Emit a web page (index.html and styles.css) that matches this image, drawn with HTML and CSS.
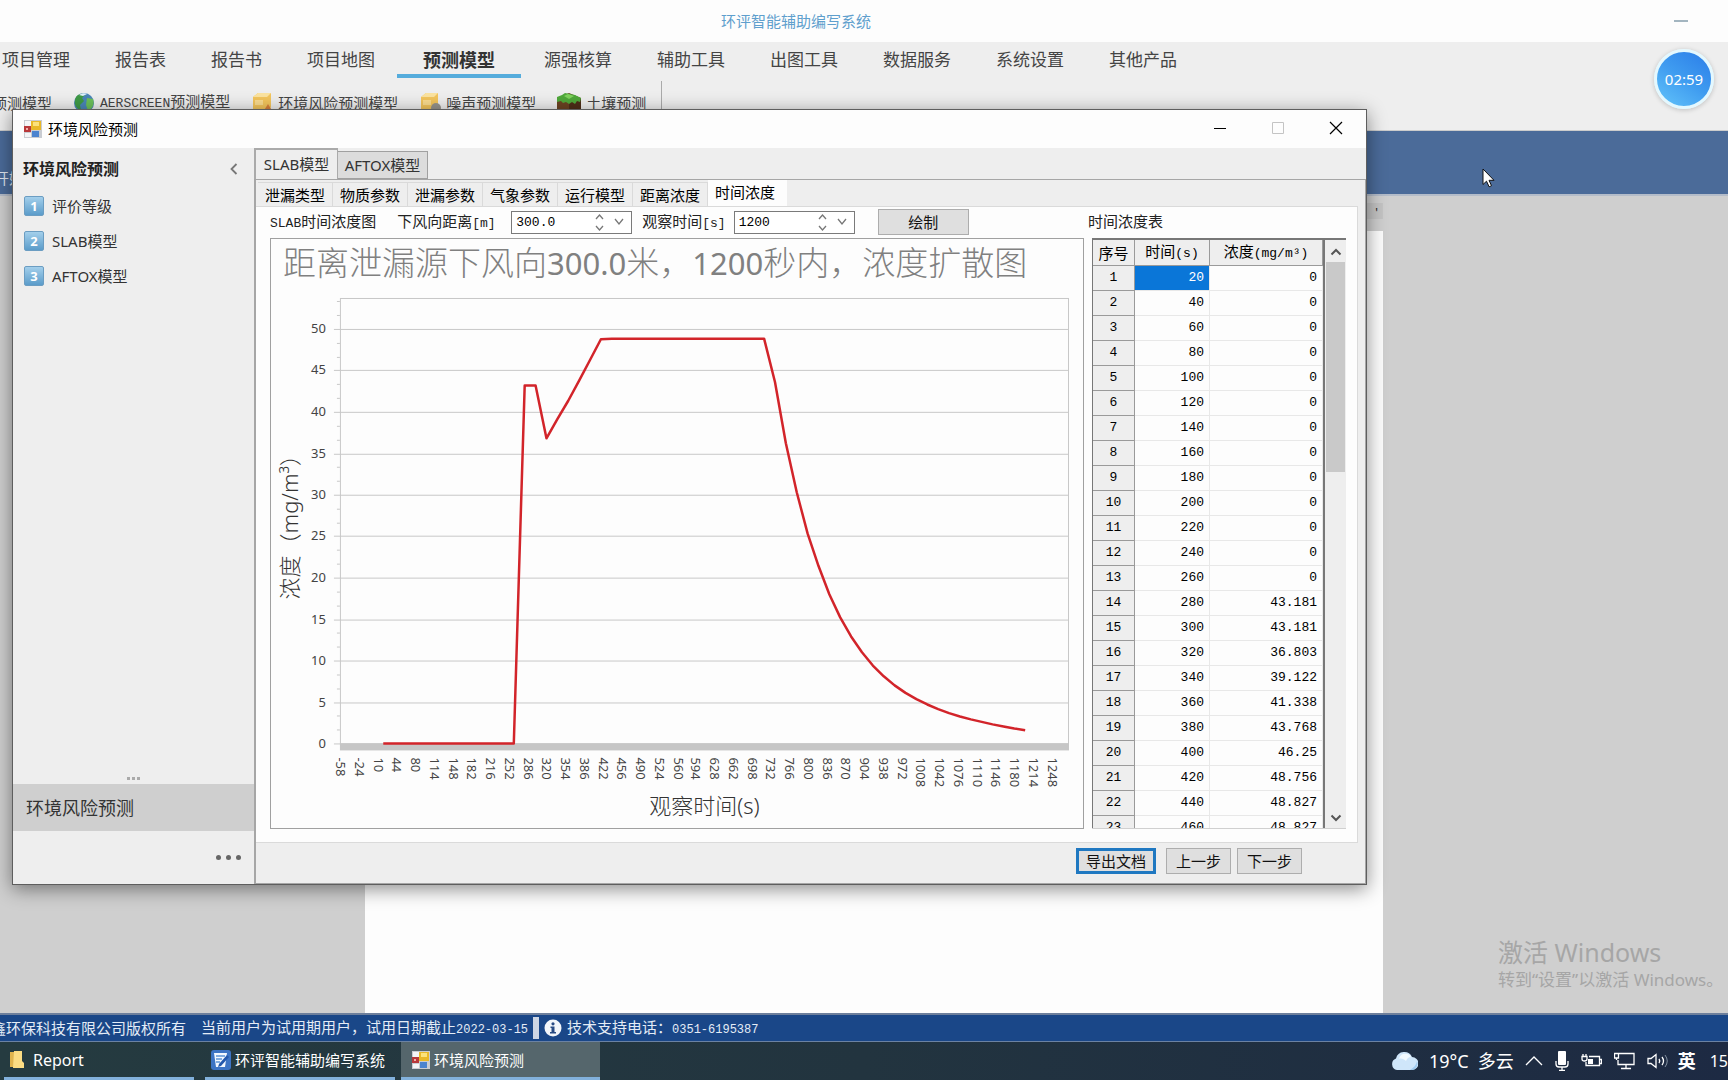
FILE: index.html
```html
<!DOCTYPE html>
<html lang="zh-CN">
<head>
    <meta charset="UTF-8">
    <meta name="viewport" content="width=device-width, initial-scale=1.0">
    <title>环评智能辅助编写系统</title>
    <link rel="stylesheet" href="styles.css">
</head>
<body>
    <div class="app">
        <header class="app-title">
            <h1>环评智能辅助编写系统</h1>
            <button class="app-min" aria-label="最小化"></button>
        </header>
        <nav class="menu">
            <button>项目管理</button>
            <button>报告表</button>
            <button>报告书</button>
            <button>项目地图</button>
            <button class="active">预测模型</button>
            <button>源强核算</button>
            <button>辅助工具</button>
            <button>出图工具</button>
            <button>数据服务</button>
            <button>系统设置</button>
            <button>其他产品</button>
        </nav>
        <div class="ribbon">
            <button class="cut">预测模型</button>
            <button>
                <svg width="22" height="22" viewBox="0 0 22 22"><circle cx="11" cy="11" r="10" fill="#4a86b8"/><path d="M3 5c3-4 8-4 9-2l-3 3 2 3-4 4 1 5C3 17 0 11 3 5z" fill="#3f9a45"/><path d="M14 6l6 1c2 5-1 10-5 12l-2-6z" fill="#6cc05a"/><path d="M6 3c3-2 6-2 8-1l-4 2z" fill="#dff0ff"/></svg>
                <span><span class="mono">AERSCREEN</span>预测模型</span>
            </button>
            <button>
                <svg width="22" height="22" viewBox="0 0 22 22"><path d="M2 5l5-4h13v14l-4 5H2z" fill="#f3c55c"/><path d="M2 5l5-4h13l-4 4z" fill="#fbe3a0"/><path d="M4 8h8v5H4z" fill="#fadb8e"/><path d="M17 12l5 8H12z" fill="#d9803a"/></svg>
                <span>环境风险预测模型</span>
            </button>
            <button>
                <svg width="22" height="22" viewBox="0 0 22 22"><path d="M2 5l5-4h12v14l-4 5H2z" fill="#f3c55c"/><path d="M2 5l5-4h12l-4 4z" fill="#fbe3a0"/><path d="M4 8h8v5H4z" fill="#fadb8e"/><circle cx="17" cy="16" r="5" fill="#97948c"/></svg>
                <span>噪声预测模型</span>
            </button>
            <button>
                <svg width="24" height="22" viewBox="0 0 24 22"><path d="M0 6l12-5 12 5v14H0z" fill="#6b4322"/><path d="M12 10v12l12-3V6z" fill="#4e2f18"/><path d="M0 5l5-2 3-2 5 1 5 1 6 3-1 4-3-1-2 3-3-2-3 2-3-2-3 1-2-2-4 1z" fill="#4fa83a"/><path d="M7 4l4-2 6 2-5 3z" fill="#7fd35c"/></svg>
                <span>土壤预测</span>
            </button>
            <span class="ribbon-line"></span>
        </div>
        <div class="doc-bar"><span>开始</span></div>
        <div class="workspace">
            <div class="ruler">'</div>
            <div class="sheet"></div>
        </div>
        <footer class="status">
            <span class="copyright">鑫环保科技有限公司版权所有</span>
            <span>当前用户为试用期用户，试用日期截止<span class="mono">2022-03-15</span></span>
            <i class="status-line"></i>
            <svg width="18" height="18" viewBox="0 0 18 18"><circle cx="9" cy="9" r="8.500" fill="#f2f6fa"/><circle cx="9" cy="4.800" r="1.600" fill="#274b83"/><path d="M6.500 7.500h4v5.500h1.500v1.500h-6V13h1.500V9H6.500z" fill="#274b83"/></svg>
            <span>技术支持电话：<span class="mono">0351-6195387</span></span>
        </footer>
        <div class="taskbar">
            <button class="task">
                <svg width="14" height="18" viewBox="0 0 14 18"><path d="M0 1h6v15H0z" fill="#e0b44e"/><path d="M4 0h8v10l2 2v5H3z" fill="#fbdc83"/></svg>
                <span class="report">Report</span>
            </button>
            <button class="task task-app">
                <svg width="20" height="20" viewBox="0 0 20 20"><rect width="20" height="20" rx="3" fill="#3d74c4"/><path d="M3 3h13l-2 14H5z" fill="#f3f8ff"/><path d="M5 6h9M5 9h6M5 12h4" stroke="#5d94d8" stroke-width="1.500"/><path d="M16 5l2 2-8 9-3 1 1-3z" fill="#2358ad"/></svg>
                <span>环评智能辅助编写系统</span>
            </button>
            <button class="task current">
                <svg width="18" height="18" viewBox="0 0 18 18"><use href="#form-icon"/></svg>
                <span>环境风险预测</span>
            </button>
            <div class="tray">
                <svg class="cloud" width="28" height="20" viewBox="0 0 28 20"><path d="M7 19a6 6 0 0 1-1-11.500A8.500 8.500 0 0 1 22 6a6.500 6.500 0 0 1 0 13z" fill="#cfe6fa"/><path d="M9 8a6.500 6.500 0 0 1 12-2c-3 0-4 2-5 4-2-2-5-3-7-2z" fill="#f2faff"/><path d="M20 19h2a6.500 6.500 0 0 0 5-9c-1 5-4 7-7 9z" fill="#9fcbf0"/></svg>
                <span class="weather">19°C&ensp;多云</span>
                <svg width="18" height="18" viewBox="0 0 18 18"><path d="M1 13l8-8 8 8" class="line"/></svg>
                <svg width="14" height="20" viewBox="0 0 14 20"><rect x="3" y="0" width="8" height="14" rx="1" fill="#fff"/><path d="M1 10v3q0 3 3 3h6q3 0 3-3v-3M7 16v3M4 19.500h6" class="line"/></svg>
                <svg width="21" height="18" viewBox="0 0 21 18"><path d="M8 4.500h10.500v9H5V10M19 7.500h1.500v4H19M1 4.500h5V7q0 2-2.500 2T1 7zM2 2v2M5 2v2" class="line"/><path d="M7 7h5v5H7z" fill="#fff"/></svg>
                <svg width="21" height="18" viewBox="0 0 21 18"><path d="M5 1.500h15v11H4V8M12 13v3M7 16.500h10M.5 1.500h4V6h-4zM2.500 6v2" class="line"/></svg>
                <svg width="22" height="18" viewBox="0 0 22 18"><path d="M1 6.500h3l5-4v13l-5-4H1zM12 7q1.500 2 0 4M15 5q3 4 0 8" class="line"/><path d="M18 3q4.500 6 0 12" stroke="#8290a0" fill="none"/></svg>
                <span class="ime">英</span>
                <span class="clock">15</span>
            </div>
        </div>
    </div>

    <div class="watermark">
        <p class="mark-big">激活 Windows</p>
        <p>转到“设置”以激活 Windows。</p>
    </div>
    <div class="timer">02:59</div>

    <section class="dialog">
        <div class="dialog-title">
            <svg width="18" height="18" viewBox="0 0 18 18">
                <g id="form-icon">
                    <rect x="0" y="0" width="18" height="18" fill="#c9ccd2"/>
                    <rect x="1" y="1" width="6" height="5" fill="#f4f5f7"/>
                    <rect x="0" y="6" width="7" height="6" fill="#b8383b"/>
                    <rect x="2" y="8" width="2" height="2" fill="#f1b0a8"/>
                    <rect x="7" y="1" width="10" height="9" fill="#e9b929"/>
                    <rect x="9" y="2" width="6" height="4" fill="#fbe27c"/>
                    <rect x="1" y="13" width="6" height="4" fill="#f4f5f7"/>
                    <rect x="8" y="11" width="7" height="6" fill="#4b83cf"/>
                </g>
            </svg>
            <h2>环境风险预测</h2>
            <div class="window-buttons">
                <button aria-label="最小化"><svg width="14" height="14" viewBox="0 0 14 14"><path d="M1 7.500h12" stroke="#000"/></svg></button>
                <button aria-label="最大化" disabled><svg width="14" height="14" viewBox="0 0 14 14"><path d="M1.500 1.500h11v11h-11z" stroke="#c4c4c4" fill="none"/></svg></button>
                <button aria-label="关闭"><svg width="14" height="14" viewBox="0 0 14 14"><path d="M1 1l12 12M13 1L1 13" stroke="#000" stroke-width="1.200"/></svg></button>
            </div>
        </div>
        <div class="dialog-body">
            <aside class="sidebar">
                <div class="side-head">
                    <h3>环境风险预测</h3>
                    <button aria-label="折叠"><svg width="8" height="12" viewBox="0 0 8 12"><path d="M6.500 1L1.500 6l5 5" stroke="#777" stroke-width="1.800" fill="none"/></svg></button>
                </div>
                <ul>
                    <li><a href="#"><b>1</b>评价等级</a></li>
                    <li><a href="#"><b>2</b>SLAB模型</a></li>
                    <li><a href="#"><b>3</b>AFTOX模型</a></li>
                </ul>
                <div class="grip"><i></i><i></i><i></i></div>
                <button class="side-group">环境风险预测</button>
                <div class="side-more"><button aria-label="更多"><i></i><i></i><i></i></button></div>
            </aside>
            <div class="main">
                <div class="outer-tabs">
                    <button class="active">SLAB模型</button>
                    <button>AFTOX模型</button>
                </div>
                <div class="panel">
                    <div class="inner-tabs">
                        <button>泄漏类型</button>
                        <button>物质参数</button>
                        <button>泄漏参数</button>
                        <button>气象参数</button>
                        <button>运行模型</button>
                        <button>距离浓度</button>
                        <button class="active">时间浓度</button>
                    </div>
                    <div class="page">
                        <div class="left">
                            <div class="toolbar">
                                <span class="chart-name"><span class="mono">SLAB</span>时间浓度图</span>
                                <label class="wide" for="distance">下风向距离<span class="mono">[m]</span></label>
                                <div class="spin">
                                    <input type="text" id="distance" value="300.0">
                                    <button aria-label="增减"><svg width="9" height="17" viewBox="0 0 9 17"><path d="M1 5l3.500-4L8 5M1 12l3.500 4L8 12"/></svg></button>
                                    <button aria-label="展开"><svg width="10" height="8" viewBox="0 0 10 8"><path d="M1 1l4 5 4-5"/></svg></button>
                                </div>
                                <label for="duration">观察时间<span class="mono">[s]</span></label>
                                <div class="spin">
                                    <input type="text" id="duration" value="1200">
                                    <button aria-label="增减"><svg width="9" height="17" viewBox="0 0 9 17"><path d="M1 5l3.500-4L8 5M1 12l3.500 4L8 12"/></svg></button>
                                    <button aria-label="展开"><svg width="10" height="8" viewBox="0 0 10 8"><path d="M1 1l4 5 4-5"/></svg></button>
                                </div>
                                <button class="btn draw">绘制</button>
                            </div>
                            <div class="chart-box">
                                <h4>距离泄漏源下风向<span>300.0</span>米，<span>1200</span>秒内，浓度扩散图</h4>
                                <svg id="chart" class="chart" viewBox="0 0 813 540"></svg>
                            </div>
                        </div>
                        <div class="right">
                            <div class="table-name">时间浓度表</div>
                            <div class="grid">
                                <div class="rows">
                                    <table>
                                        <thead>
                                            <tr>
                                                <th class="no">序号</th>
                                                <th class="time">时间<span class="mono">(s)</span></th>
                                                <th>浓度<span class="mono">(mg/m³)</span></th>
                                            </tr>
                                        </thead>
                                        <tbody id="rows"></tbody>
                                    </table>
                                </div>
                                <div class="scroll">
                                    <svg width="12" height="8" viewBox="0 0 12 8"><path d="M1.500 6.500L6 2l4.500 4.500"/></svg>
                                    <div class="track"><div class="thumb"></div></div>
                                    <svg width="12" height="8" viewBox="0 0 12 8"><path d="M1.500 1.500L6 6l4.500-4.500"/></svg>
                                </div>
                            </div>
                        </div>
                    </div>
                    <div class="actions">
                        <button class="btn primary">导出文档</button>
                        <button class="btn">上一步</button>
                        <button class="btn">下一步</button>
                    </div>
                </div>
            </div>
        </div>
    </section>

    <svg class="cursor" width="13" height="20" viewBox="0 0 13 20"><path d="M1 1v15.500l3.500-3.300 2.600 5.600 2.400-1.100-2.500-5.400H12z" fill="#fff" stroke="#111"/></svg>

    <script src="script.js"></script>
</body>
</html>
```
FILE: styles.css
```css
* {
    box-sizing: border-box;
}

body {
    margin: 0;
    height: 100vh;
    overflow: hidden;
    font-family: "Noto Sans", "Noto Sans CJK SC", sans-serif;
    font-size: 15px;
    line-height: 20px;
    color: #222;
}

h1, h2, h3, h4, p, ul {
    margin: 0;
    padding: 0;
    font-weight: normal;
}

button {
    margin: 0;
    padding: 0;
    border: none;
    background: none;
    font: inherit;
    color: inherit;
    white-space: nowrap;
}

svg {
    flex: none;
}

.mono {
    font-family: "Liberation Mono", monospace;
    font-size: 13px;
}

/* main application */
.app {
    display: flex;
    flex-direction: column;
    height: 100%;
    background: #eee;
}

.app-title {
    display: flex;
    align-items: center;
    height: 42px;
    background: #fdfdfd;
}

.app-title h1 {
    flex: 1;
    padding-right: 82px;
    font-size: 15px;
    text-align: center;
    color: #5f9fcd;
}

.app-min {
    width: 14px;
    height: 2px;
    margin-right: 40px;
    background: #a3b5c0;
}

.menu {
    display: flex;
    height: 36px;
    margin-left: -21px;
}

.menu button {
    padding: 0 22px 0 23px;
    font-size: 17px;
    color: #444;
}

.menu .active {
    width: 124px;
    padding: 4px 0 0;
    border-bottom: 4px solid #55acdc;
    font-size: 18px;
    font-weight: bold;
    color: #333;
}

.ribbon {
    display: flex;
    align-items: center;
    gap: 21px;
    height: 53px;
    padding-bottom: 3px;
    border-bottom: 1px solid #ccc;
}

.ribbon button {
    display: flex;
    align-items: center;
    gap: 5px;
    color: #444;
}

.ribbon .cut {
    margin-left: -8px;
}

.ribbon-line {
    width: 1px;
    height: 44px;
    margin-left: -6px;
    background: #aaa;
}

.doc-bar {
    height: 65px;
    padding: 37px 0 0;
    border-bottom: 2px solid #b4bcc9;
    background: #4b6b99;
    color: #dfe6f0;
}

.doc-bar span {
    margin-left: -6px;
}

.workspace {
    display: flex;
    flex-direction: column;
    flex: 1;
    padding: 7px 345px 0 365px;
    background: #cfcfcf;
}

.ruler {
    height: 16px;
    margin-bottom: 12px;
    padding-right: 5px;
    background: #c4c4c4;
    font-size: 12px;
    text-align: right;
}

.sheet {
    flex: 1;
    background: #fdfdfd;
}

.status {
    display: flex;
    align-items: center;
    height: 29px;
    border-top: 2px solid #6d7f9c;
    border-bottom: 1px solid #6b82a3;
    background: #1a4788;
    color: #e4ecf6;
    white-space: nowrap;
}

.status .mono {
    font-size: 12px;
}

.copyright {
    margin: 0 15px 0 -9px;
}

.status-line {
    width: 6px;
    height: 22px;
    margin: 0 5px;
    background: #cdd6e4;
}

.status svg {
    margin-right: 5px;
}

.taskbar {
    display: flex;
    height: 38px;
    padding-left: 4px;
    background: linear-gradient(90deg, #253b40, #22343f 50%, #1d2a43);
    color: #fff;
}

.task {
    display: flex;
    align-items: center;
    gap: 4px;
    width: 190px;
    padding-left: 6px;
    border-bottom: 3px solid #82b1dc;
}

.task-app {
    margin: 0 6px 0 11px;
}

.current {
    width: 199px;
    padding-left: 11px;
    background: #55666c;
}

.report {
    padding-left: 5px;
    font-size: 16px;
}

.tray {
    display: flex;
    align-items: center;
    gap: 12px;
    margin-left: auto;
    font-size: 18px;
}

.cloud,
.weather {
    margin-right: -1px;
}

.ime {
    margin: 0 2px 0 -3px;
    font-weight: bold;
}

.clock {
    font-size: 16px;
}

.line {
    fill: none;
    stroke: #fff;
    stroke-width: 1.300;
}

.watermark {
    position: absolute;
    right: 0;
    bottom: 88px;
    width: 230px;
    color: #a6a6a6;
    font-size: 17px;
    line-height: 24px;
    white-space: nowrap;
}

.watermark .mark-big {
    font-size: 25px;
    line-height: 32px;
}

.timer {
    position: absolute;
    top: 49px;
    right: 14px;
    width: 60px;
    height: 60px;
    border: 3px solid #e4f8fe;
    border-radius: 50%;
    background: linear-gradient(215deg, #2a7ce8, #3f9cf0 50%, #63c4fa);
    box-shadow: 0 1px 5px rgba(0, 0, 0, 0.2);
    color: #fff;
    line-height: 54px;
    text-align: center;
}

.cursor {
    position: absolute;
    top: 168px;
    left: 1482px;
}

/* prediction window */
.dialog {
    position: absolute;
    top: 109px;
    right: 361px;
    bottom: 195px;
    left: 12px;
    display: flex;
    flex-direction: column;
    border: 1px solid #5e5e5e;
    background: #eee;
    box-shadow: 0 4px 18px rgba(0, 0, 0, 0.45);
}

.dialog-title {
    display: flex;
    align-items: center;
    gap: 6px;
    height: 38px;
    padding: 0 1px 0 11px;
    background: #fdfdfd;
    color: #000;
}

.dialog-title h2 {
    font-size: 15px;
}

.window-buttons {
    display: flex;
    margin-left: auto;
}

.window-buttons button {
    width: 58px;
    height: 38px;
}

.dialog-body {
    display: flex;
    flex: 1;
    min-height: 0;
}

.sidebar {
    display: flex;
    flex-direction: column;
    width: 241px;
}

.side-head {
    display: flex;
    align-items: center;
    justify-content: space-between;
    height: 41px;
    padding: 0 16px 0 10px;
}

.side-head h3 {
    font-size: 16px;
    font-weight: bold;
}

.sidebar ul {
    flex: 1;
    list-style: none;
}

.sidebar a {
    display: flex;
    align-items: center;
    gap: 8px;
    height: 35px;
    padding: 0 0 2px 11px;
    color: #333;
    text-decoration: none;
}

.sidebar b {
    width: 20px;
    height: 20px;
    border: 1px solid #6b9dc2;
    border-radius: 2px;
    background: linear-gradient(#a3cfeb, #5b9cca);
    color: #fff;
    font-size: 13px;
    line-height: 18px;
    text-align: center;
}

.grip {
    display: flex;
    justify-content: center;
    gap: 2px;
    height: 7px;
}

.grip i {
    width: 3px;
    height: 3px;
    background: #aaa;
}

.side-group {
    height: 47px;
    padding-left: 13px;
    background: #cfcfcf;
    font-size: 18px;
    text-align: left;
    color: #333;
}

.side-more {
    height: 53px;
    padding: 13px 13px 0 0;
    text-align: right;
}

.side-more button {
    display: inline-flex;
    gap: 5px;
}

.side-more i {
    width: 5px;
    height: 5px;
    border-radius: 50%;
    background: #666;
}

.main {
    display: flex;
    flex-direction: column;
    flex: 1;
    min-width: 0;
}

.outer-tabs {
    display: flex;
    align-items: flex-end;
    height: 31px;
}

.outer-tabs button {
    width: 90px;
    height: 28px;
    border: 1px solid #a0a0a0;
    border-left: none;
    background: #dcdcdc;
    color: #333;
}

.outer-tabs .active {
    width: 84px;
    height: 31px;
    padding-bottom: 2px;
    border: 2px solid #aaa;
    border-right-width: 1px;
    border-bottom: none;
    background: #eee;
}

.panel {
    display: flex;
    flex-direction: column;
    flex: 1;
    min-height: 0;
    border: 1px solid #a6a6a6;
    border-left-width: 2px;
}

.inner-tabs {
    display: flex;
    align-items: flex-end;
    height: 26px;
    padding-left: 2px;
}

.inner-tabs button {
    width: 75px;
    height: 24px;
    border: 1px solid #dadada;
    border-width: 1px 1px 0 0;
    color: #000;
}

.inner-tabs .active {
    width: 79px;
    height: 26px;
    padding: 0 5px 2px 0;
    border: none;
    background: #fdfdfd;
}

.page {
    display: flex;
    gap: 4px;
    flex: 1;
    min-height: 0;
    margin-right: 7px;
    padding: 2px 11px 13px 14px;
    border: 1px solid #dadada;
    border-left: none;
    background: #fdfdfd;
}

.left,
.right {
    display: flex;
    flex-direction: column;
}

.left {
    flex: 1;
    min-width: 0;
}

.toolbar {
    display: flex;
    align-items: center;
    height: 26px;
    margin-bottom: 3px;
    white-space: nowrap;
}

.toolbar label {
    padding-right: 3px;
}

.toolbar .wide {
    width: 109px;
}

.chart-name {
    margin-right: 21px;
}

.spin {
    display: flex;
    align-items: center;
    gap: 10px;
    width: 121px;
    height: 23px;
    margin: 0 10px 0 5px;
    padding-right: 7px;
    border: 1px solid #7a7a7a;
    background: #fff;
}

.spin input {
    flex: 1;
    width: 60px;
    height: 19px;
    padding: 0 4px;
    border: none;
    outline: none;
    background: none;
    font-family: "Liberation Mono", monospace;
    font-size: 13px;
}

.spin button {
    display: flex;
}

.spin path {
    fill: none;
    stroke: #777;
    stroke-width: 1.300;
}

.btn {
    height: 26px;
    padding: 0 9px;
    border: 1px solid #adadad;
    background: #dfdfdf;
    color: #111;
}

.draw {
    width: 91px;
    margin-left: 13px;
}

.chart-box {
    flex: 1;
    min-height: 0;
    overflow: hidden;
    border: 1px solid #a0a0a0;
}

.chart-box h4 {
    padding: 1px 0 0 12px;
    color: #808080;
    font-size: 33px;
    font-weight: 300;
    line-height: 46px;
    white-space: nowrap;
}

.chart-box h4 span {
    font-size: 31px;
    font-weight: normal;
}

.chart {
    display: block;
    width: 100%;
}

.chart text {
    fill: #444;
    font-size: 13px;
}

.chart .axis-title {
    fill: #333;
    font-size: 22px;
    font-weight: 300;
    text-anchor: middle;
}

.chart .y-label {
    text-anchor: end;
}

.chart .rule {
    stroke: #c8c8c8;
}

.chart .band {
    fill: #c6c6c6;
}

.chart .curve {
    fill: none;
    stroke: #d2242a;
    stroke-width: 2.500;
    stroke-linejoin: round;
}

.right {
    width: 258px;
}

.table-name {
    height: 29px;
    padding-top: 2px;
}

.grid {
    display: flex;
    flex: 1;
    min-height: 0;
    margin-left: 4px;
    border-top: 2px solid #777;
    border-bottom: 1px solid #d0d0d0;
}

.rows {
    flex: 1;
    overflow: hidden;
    border-right: 2px solid #777;
    border-left: 1px solid #777;
}

.grid table {
    width: 100%;
    border-collapse: separate;
    border-spacing: 0;
    table-layout: fixed;
}

.grid th,
.grid td {
    height: 25px;
    padding: 0 5px;
    border: 1px solid #e8e8e8;
    border-width: 0 1px 1px 0;
    font-weight: normal;
    text-align: right;
    color: #000;
}

.grid tbody {
    font-family: "Liberation Mono", monospace;
    font-size: 13px;
}

.grid th {
    padding: 0;
    border-color: #9a9a9a;
    background: #eee;
    text-align: center;
}

.grid thead th {
    height: 26px;
}

.no {
    width: 42px;
}

.time {
    width: 75px;
}

.grid .picked {
    background: #0a76d8;
    color: #fff;
}

.scroll {
    display: flex;
    flex-direction: column;
    align-items: center;
    width: 21px;
    padding: 8px 1px 6px;
    background: #eee;
}

.scroll path {
    fill: none;
    stroke: #555;
    stroke-width: 2;
}

.track {
    flex: 1;
    width: 100%;
    padding-top: 6px;
}

.thumb {
    height: 210px;
    background: #c9c9c9;
}

.actions {
    display: flex;
    align-items: center;
    justify-content: flex-end;
    gap: 6px;
    height: 40px;
    padding: 0 63px 4px 0;
}

.primary {
    margin-right: 4px;
    padding: 0 7px;
    border: 3px solid #1f78c1;
}
```
FILE: script.js
```js
// concentration every 20 s, mg/m³
const values = [
    0, 0, 0, 0, 0, 0, 0, 0, 0, 0, 0, 0, 0,
    43.181, 43.181, 36.803, 39.122, 41.338, 43.768, 46.25,
    48.756, 48.827, 48.827, 48.827, 48.827, 48.827, 48.827, 48.827, 48.827, 48.827,
    48.827, 48.827, 48.827, 48.827, 48.827, 48.827,
    43.6, 36.2, 30.3, 25.3, 21.4, 18.0, 15.2, 12.9, 11.0, 9.4,
    8.1, 7.0, 6.1, 5.35, 4.7, 4.15, 3.65, 3.25, 2.9, 2.6, 2.3, 2.05, 1.8, 1.6
];
const labels = [
    -58, -24, 10, 44, 80, 114, 148, 182, 216, 252, 286, 320, 354, 386, 422, 456, 490, 524, 560, 594,
    628, 662, 698, 732, 766, 800, 836, 870, 904, 938, 972, 1008, 1042, 1076, 1110, 1146, 1180, 1214, 1248
];

const left = 69, right = 798, ceiling = 12, zero = 458;
const x = t => 101.5 + t * 0.5447;
const y = v => zero - v * 8.3;

let svg = `<rect class="rule" x="${left}.5" y="${ceiling}.5" width="${right - left}" height="${zero - ceiling}" fill="none"/>`;

for (let i = 0; i <= 32; i++) {
    const v = i * 5 / 3;
    const py = Math.round(y(v)) + 0.5;
    if (i % 3 === 0) {
        svg += `<line class="rule" x1="${left - 6}" y1="${py}" x2="${right}" y2="${py}"/>`;
        svg += `<text class="y-label" x="${left - 14}" y="${py + 4}">${i / 3 * 5}</text>`;
    } else {
        svg += `<line class="rule" x1="${left - 3}" y1="${py}" x2="${left}" y2="${py}"/>`;
    }
}

svg += `<rect class="band" x="${left}" y="${zero}" width="${right - left + 1}" height="7"/>`;

labels.forEach((label, i) => {
    const px = Math.round(left + i * 18.75) - 4;
    svg += `<text transform="translate(${px} 472) rotate(90)">${label}</text>`;
});

const points = values.map((v, i) => `${x((i + 1) * 20).toFixed(1)},${y(v).toFixed(1)}`);
svg += `<polyline class="curve" points="${points.join(" ")}"/>`;
svg += `<text class="axis-title" x="434" y="529">观察时间(s)</text>`;
svg += `<text class="axis-title" transform="translate(27 236) rotate(-90)">浓度（mg/m³）</text>`;
document.getElementById("chart").innerHTML = svg;

let rows = "";
values.slice(0, 23).forEach((v, i) => {
    rows += `<tr><th>${i + 1}</th><td${i === 0 ? ' class="picked"' : ""}>${(i + 1) * 20}</td><td>${v}</td></tr>`;
});
document.getElementById("rows").innerHTML = rows;
```
